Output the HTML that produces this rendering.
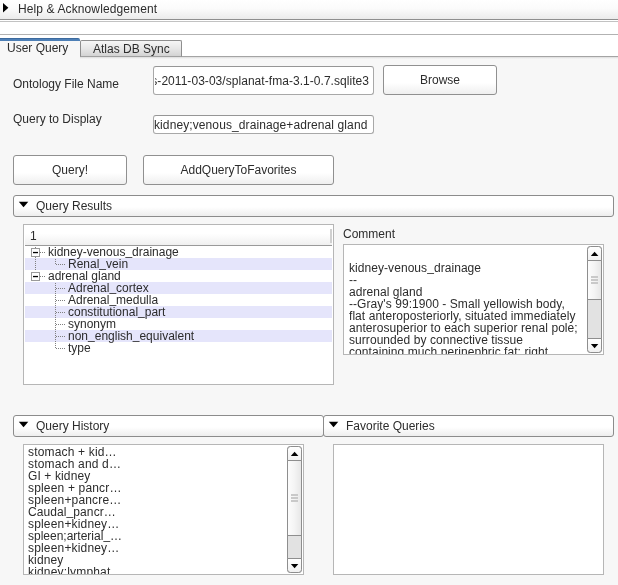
<!DOCTYPE html>
<html><head><meta charset="utf-8">
<style>
*{box-sizing:border-box;margin:0;padding:0}
html,body{width:618px;height:585px;overflow:hidden;background:#fff}
body{position:relative;will-change:transform;font-family:"Liberation Sans",sans-serif;font-size:12px;color:#2c2c2c}
.a{position:absolute;white-space:nowrap}
.t{position:absolute;white-space:nowrap;line-height:14px;height:14px}
.btn{position:absolute;border:1px solid #909090;border-radius:3px;background:linear-gradient(#ffffff,#ffffff 60%,#efefef);text-align:center}
.cb{position:absolute;border:1px solid #8c8c8c;border-radius:3px;background:linear-gradient(#ffffff,#ffffff 55%,#eeeeee)}
.inp{position:absolute;border:1px solid #a8a8a8;border-top-color:#969696;border-radius:3px;background:#fff;overflow:hidden}
.box{position:absolute;border:1px solid #b6b6b6;background:#fff;overflow:hidden}
.row{position:absolute;left:25px;width:307px;height:12px;background:#e5e5fb}
svg{position:absolute;left:0;top:0}
</style></head><body>

<div class="a" style="left:0;top:0;width:618px;height:19px;background:linear-gradient(#ffffff,#fbfbfb 45%,#ebebeb)"></div>
<div class="a" style="left:0;top:19px;width:618px;height:1px;background:#8e8e8e"></div>
<div class="a" style="left:0;top:21px;width:618px;height:1px;background:#c2c2c2"></div>
<div class="t" style="left:18px;top:2px;letter-spacing:0.11px">Help &amp; Acknowledgement</div>
<div class="a" style="left:0;top:34px;width:618px;height:1px;background:#b2b2b2"></div>
<div class="a" style="left:0;top:56px;width:618px;height:529px;background:linear-gradient(#dcdcdc,#f7f7f7 2px);border-top:1px solid #a4a4a4"></div>
<div class="a" style="left:0;top:38px;width:80px;height:21px;background:linear-gradient(#3c6a9e 1px,#4d7fb6 1px,#4d7fb6 3px,#f7f7f7 3px);border-top-right-radius:2px"></div>
<div class="t" style="left:7px;top:41px">User Query</div>
<div class="a" style="left:80px;top:40px;width:102px;height:17px;background:linear-gradient(#f6f6f6,#e7e7e7 50%,#d3d3d3);border:1px solid #8e8e8e;border-bottom-color:#a0a0a0;border-radius:2px 2px 0 0"></div>
<div class="t" style="left:93px;top:42px">Atlas DB Sync</div>
<div class="t" style="left:13px;top:77px">Ontology File Name</div>
<div class="inp" style="left:153px;top:66px;width:221px;height:29px"><div class="a" style="left:1px;top:0;width:217px;height:27px;overflow:hidden"><div class="t" style="right:3px;top:7px;letter-spacing:0.045px">s-2011-03-03/splanat-fma-3.1-0.7.sqlite3</div></div></div>
<div class="btn" style="left:383px;top:65px;width:114px;height:30px;line-height:28px">Browse</div>
<div class="t" style="left:13px;top:112px">Query to Display</div>
<div class="inp" style="left:153px;top:115px;width:221px;height:19px"><div class="t" style="left:0px;top:2px;letter-spacing:0.1px">kidney;venous_drainage+adrenal gland</div></div>
<div class="btn" style="left:13px;top:155px;width:114px;height:30px;line-height:28px">Query!</div>
<div class="btn" style="left:143px;top:155px;width:191px;height:30px;line-height:28px">AddQueryToFavorites</div>
<div class="cb" style="left:13px;top:195px;width:601px;height:22px"></div>
<div class="t" style="left:36px;top:199px">Query Results</div>
<div class="box" style="left:23px;top:224px;width:311px;height:161px"></div>
<div class="a" style="left:25px;top:226px;width:307px;height:19px;background:linear-gradient(#ffffff,#ffffff 40%,#f0f0f0)"></div>
<div class="a" style="left:25px;top:245px;width:307px;height:1px;background:#9a9a9a"></div>
<div class="a" style="left:330px;top:229px;width:2px;height:14px;background:#d0d0d0"></div>
<div class="t" style="left:30px;top:229px">1</div>
<div class="row" style="top:258px"></div>
<div class="row" style="top:282px"></div>
<div class="row" style="top:306px"></div>
<div class="row" style="top:330px"></div>
<div class="t" style="left:48px;top:245px">kidney-venous<span style="position:relative;top:-1px">_</span>drainage</div>
<div class="t" style="left:68px;top:257px">Renal<span style="position:relative;top:-1px">_</span>vein</div>
<div class="t" style="left:48px;top:269px">adrenal gland</div>
<div class="t" style="left:68px;top:281px">Adrenal<span style="position:relative;top:-1px">_</span>cortex</div>
<div class="t" style="left:68px;top:293px">Adrenal<span style="position:relative;top:-1px">_</span>medulla</div>
<div class="t" style="left:68px;top:305px">constitutional<span style="position:relative;top:-1px">_</span>part</div>
<div class="t" style="left:68px;top:317px">synonym</div>
<div class="t" style="left:68px;top:329px">non<span style="position:relative;top:-1px">_</span>english<span style="position:relative;top:-1px">_</span>equivalent</div>
<div class="t" style="left:68px;top:341px">type</div>
<div class="t" style="left:343px;top:227px">Comment</div>
<div class="box" style="left:343px;top:244px;width:261px;height:111px">
<div class="t" style="left:5px;top:16px;letter-spacing:0.06px">kidney-venous<span style="position:relative;top:-1px">_</span>drainage</div>
<div class="t" style="left:5px;top:28px;letter-spacing:0.06px">--</div>
<div class="t" style="left:5px;top:40px;letter-spacing:0.06px">adrenal gland</div>
<div class="t" style="left:5px;top:52px;letter-spacing:0.06px">--Gray's 99:1900 - Small yellowish body,</div>
<div class="t" style="left:5px;top:64px;letter-spacing:0.06px">flat anteroposteriorly, situated immediately</div>
<div class="t" style="left:5px;top:76px;letter-spacing:0.06px">anterosuperior to each superior renal pole;</div>
<div class="t" style="left:5px;top:88px;letter-spacing:0.06px">surrounded by connective tissue</div>
<div class="t" style="left:5px;top:100px;letter-spacing:0.06px">containing much perinephric fat; right</div>
</div>
<div class="cb" style="left:13px;top:415px;width:311px;height:22px"></div>
<div class="t" style="left:36px;top:419px">Query History</div>
<div class="cb" style="left:323px;top:415px;width:291px;height:22px"></div>
<div class="t" style="left:346px;top:419px">Favorite Queries</div>
<div class="box" style="left:23px;top:444px;width:281px;height:131px">
<div class="t" style="left:4px;top:0px;letter-spacing:0.17px">stomach + kid…</div>
<div class="t" style="left:4px;top:12px;letter-spacing:0.17px">stomach and d…</div>
<div class="t" style="left:4px;top:24px;letter-spacing:0.12px">GI + kidney</div>
<div class="t" style="left:4px;top:36px;letter-spacing:0.17px">spleen + pancr…</div>
<div class="t" style="left:4px;top:48px;letter-spacing:0.17px">spleen+pancre…</div>
<div class="t" style="left:4px;top:60px;letter-spacing:0.09px">Caudal<span style="position:relative;top:-1px">_</span>pancr…</div>
<div class="t" style="left:4px;top:72px;letter-spacing:0.17px">spleen+kidney…</div>
<div class="t" style="left:4px;top:84px;letter-spacing:0px">spleen;arterial<span style="position:relative;top:-1px">_</span>…</div>
<div class="t" style="left:4px;top:96px;letter-spacing:0.17px">spleen+kidney…</div>
<div class="t" style="left:4px;top:108px;letter-spacing:0.12px">kidney</div>
<div class="t" style="left:4px;top:120px;letter-spacing:0.17px">kidney;lymphat…</div>
</div>
<div class="box" style="left:333px;top:444px;width:271px;height:131px"></div>
<svg width="618" height="585" viewBox="0 0 618 585">
<defs><linearGradient id="hg" x1="0" y1="0" x2="1" y2="0"><stop offset="0" stop-color="#fdfdfd"/><stop offset="0.5" stop-color="#f4f4f4"/><stop offset="1" stop-color="#e6e6e6"/></linearGradient><linearGradient id="bg" x1="0" y1="0" x2="0" y2="1"><stop offset="0" stop-color="#ffffff"/><stop offset="1" stop-color="#f0f0f0"/></linearGradient></defs>
<polygon points="3,3 3,12.4 8.4,7.7" fill="#000"/>
<polygon points="18.8,201.8 28.3,201.8 23.55,207.3" fill="#000"/>
<polygon points="18.8,421.8 28.3,421.8 23.55,427.3" fill="#000"/>
<polygon points="328.8,421.8 338.3,421.8 333.55,427.3" fill="#000"/>
<g stroke="#808080" stroke-width="1" stroke-dasharray="1 1" shape-rendering="crispEdges" fill="none">
<path d="M35.5 247v1"/>
<path d="M35.5 257v14"/>
<path d="M40 252.5 h5"/>
<path d="M40 276.5 h5"/>
<path d="M55.5 259v5"/><path d="M56 264.5h9"/>
<path d="M55.5 283v65"/>
<path d="M56 288.5h9"/>
<path d="M56 300.5h9"/>
<path d="M56 312.5h9"/>
<path d="M56 324.5h9"/>
<path d="M56 336.5h9"/>
<path d="M56 348.5h9"/>
</g>
<rect x="31.5" y="248.5" width="8" height="8" fill="#fff" stroke="#9a9a9a" shape-rendering="crispEdges"/>
<rect x="33" y="251.9" width="5" height="1.3" fill="#000"/>
<rect x="31.5" y="272.5" width="8" height="8" fill="#fff" stroke="#9a9a9a" shape-rendering="crispEdges"/>
<rect x="33" y="275.9" width="5" height="1.3" fill="#000"/>
<rect x="587.5" y="246.5" width="14" height="106" rx="3" fill="#e2e2e2" stroke="#8e8e8e"/>
<rect x="587.5" y="260.5" width="14" height="39" fill="url(#hg)" stroke="#8e8e8e"/>
<path d="M587.5 260.5 v-11 a3 3 0 0 1 3 -3 h8 a3 3 0 0 1 3 3 v11 z" fill="url(#bg)" stroke="#8e8e8e"/>
<path d="M587.5 338.5 v11 a3 3 0 0 0 3 3 h8 a3 3 0 0 0 3 -3 v-11 z" fill="url(#bg)" stroke="#8e8e8e"/>
<polygon points="594.6,251.7 590.8,256 598.4,256" fill="#000"/>
<polygon points="594.6,348.2 590.9,344 598.3,344" fill="#000"/>
<rect x="591" y="276" width="7" height="2" fill="#c9c9c9"/>
<rect x="591" y="279" width="7" height="2" fill="#c9c9c9"/>
<rect x="591" y="282" width="7" height="2" fill="#c9c9c9"/>
<rect x="287.5" y="446.5" width="14" height="126" rx="3" fill="#e2e2e2" stroke="#8e8e8e"/>
<rect x="287.5" y="460.5" width="14" height="75" fill="url(#hg)" stroke="#8e8e8e"/>
<path d="M287.5 460.5 v-11 a3 3 0 0 1 3 -3 h8 a3 3 0 0 1 3 3 v11 z" fill="url(#bg)" stroke="#8e8e8e"/>
<path d="M287.5 558.5 v11 a3 3 0 0 0 3 3 h8 a3 3 0 0 0 3 -3 v-11 z" fill="url(#bg)" stroke="#8e8e8e"/>
<polygon points="294.6,451.7 290.8,456 298.4,456" fill="#000"/>
<polygon points="294.6,568.2 290.9,564 298.3,564" fill="#000"/>
<rect x="291" y="494" width="7" height="2" fill="#c9c9c9"/>
<rect x="291" y="497" width="7" height="2" fill="#c9c9c9"/>
<rect x="291" y="500" width="7" height="2" fill="#c9c9c9"/>
</svg>
</body></html>
